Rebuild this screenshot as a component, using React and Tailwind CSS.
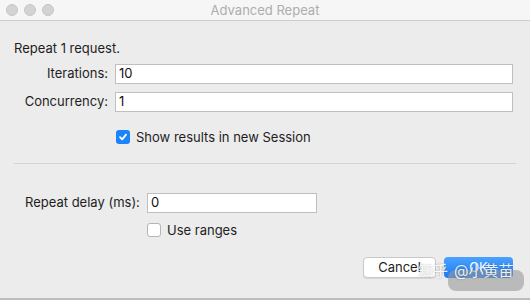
import React from 'react';

function Check({ checked }) {
  if (checked) {
    return (
      <span className="w-[14px] h-[14px] rounded-[3px] bg-[#1b84fb] flex items-center justify-center shrink-0">
        <svg width="10" height="10" viewBox="0 0 10 10">
          <path d="M2 5.2 L4.2 7.4 L8 2.6" fill="none" stroke="#fff" strokeWidth="1.8" strokeLinecap="round" strokeLinejoin="round" />
        </svg>
      </span>
    );
  }
  return <span className="w-[14px] h-[14px] rounded-[3px] bg-white border border-[#b5b5b5] shrink-0" />;
}

function Field({ value, className }) {
  return (
    <div className={`h-[20px] bg-white border border-[#bfbfbf] flex items-center px-[3px] text-[#111] ${className}`}>
      {value}
    </div>
  );
}

export default function App() {
  return (
    <div className="w-[530px] h-[300px] bg-[#ececec] flex flex-col text-[13px] text-[#1e1e1e] relative overflow-hidden" style={{ fontFamily: 'Inter, "Noto Sans CJK SC", sans-serif' }}>
      {/* title bar */}
      <div className="h-[21px] shrink-0 bg-[#f6f6f6] border-b border-[#cbcbcb] flex items-center px-[6px] relative">
        <div className="flex gap-[6px]">
          {[0, 1, 2].map(i => (
            <span key={i} className="w-[12px] h-[12px] rounded-full bg-[#d3d3d3] border border-[#c6c6c6]" />
          ))}
        </div>
        <span className="absolute inset-x-0 text-center text-[#adadad] text-[13px] leading-[20px]">Advanced Repeat</span>
      </div>

      {/* body */}
      <div className="flex-1 flex flex-col pl-[14px] pr-[17px] pt-[19px]">
        <div className="leading-[16px]">Repeat 1 request.</div>

        <div className="grid grid-cols-[94px_1fr] gap-x-[7px] gap-y-[8px] mt-[8px] items-center">
          <span className="text-right">Iterations:</span>
          <Field value="10" />
          <span className="text-right">Concurrency:</span>
          <Field value="1" />
        </div>

        <div className="flex items-center gap-[6px] ml-[102px] mt-[17px] leading-[16px]">
          <Check checked />
          <span>Show results in new Session</span>
        </div>

        <div className="h-px bg-[#d4d4d4] mt-[18px] mr-[-3px]" />

        <div className="flex items-center gap-[7px] ml-[11px] mt-[29px]">
          <span>Repeat delay (ms):</span>
          <Field value="0" className="w-[170px]" />
        </div>

        <div className="flex items-center gap-[6px] ml-[133px] mt-[9px] leading-[16px]">
          <Check checked={false} />
          <span>Use ranges</span>
        </div>

        <div className="flex justify-end gap-[8px] mt-[19px]">
          <div className="w-[73px] h-[21px] rounded-[4px] bg-white border border-[#c8c8c8] shadow-[0_1px_0_rgba(0,0,0,0.08)] flex items-center justify-center">
            Cancel
          </div>
          <div className="w-[69px] h-[21px] rounded-[4px] bg-gradient-to-b from-[#4aa2fd] to-[#1a7cf9] text-white flex items-center justify-center">
            OK
          </div>
        </div>
      </div>

      <div className="h-[2px] bg-[#bdbdbd] shrink-0" />

      {/* watermark */}
      <div className="absolute left-[418px] top-[260px] flex items-center gap-[6px] text-[15px] text-white/90 [text-shadow:0_0_2px_rgba(0,0,0,0.35)]">
        <span>知乎</span>
        <span className="relative">
          <span className="absolute left-[-6px] top-[10px] w-[76px] h-[21px] rounded-[8px] bg-[#9a9a9a]/60" />
          <span className="relative">@小黄苗</span>
        </span>
      </div>
    </div>
  );
}
